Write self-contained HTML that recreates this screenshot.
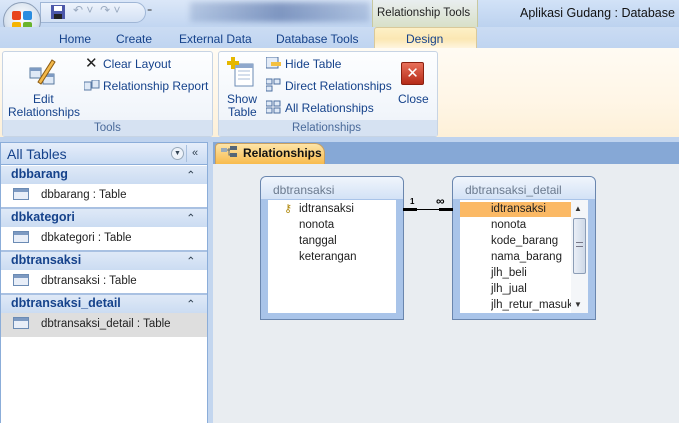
<!DOCTYPE html>
<html><head><meta charset="utf-8"><style>
*{margin:0;padding:0;box-sizing:border-box}
body{width:679px;height:423px;overflow:hidden;position:relative;font-family:"Liberation Sans","DejaVu Sans",sans-serif;font-size:11.5px;color:#15428b;background:#e9edf1}
.a{position:absolute}
.t{color:#222;font-size:11.5px;white-space:nowrap}
</style></head><body>
<div class="a" style="left:0;top:0;width:679px;height:27px;background:linear-gradient(#dbe7f8,#c2d6f1)"></div>
<div class="a" style="left:190px;top:2px;width:180px;height:20px;background:linear-gradient(90deg,rgba(90,120,170,.25),rgba(60,90,150,.55),rgba(100,130,180,.3));filter:blur(3px)"></div>
<div class="a" style="left:478px;top:0;width:201px;height:27px;background:linear-gradient(#d2e2f7,#bcd2ef)"></div>
<div class="a" style="left:40px;top:2px;width:106px;height:21px;border:1px solid #9fb6d6;border-radius:0 12px 12px 0;background:linear-gradient(#eef4fc,#d3e1f4)"></div>
<div class="a" style="left:3px;top:2px;width:38px;height:38px;border-radius:50%;background:radial-gradient(circle at 50% 40%,#fff,#d8e2ee 60%,#9fb0c6);border:1px solid #8d9fb8"></div>
<svg class="a" style="left:10px;top:9px" width="24" height="24" viewBox="0 0 24 24"><rect x="2" y="2" width="9" height="9" rx="2" fill="#e8441b"/><rect x="13" y="2" width="9" height="9" rx="2" fill="#2b8de0"/><rect x="2" y="13" width="9" height="9" rx="2" fill="#f5b400"/><rect x="13" y="13" width="9" height="9" rx="2" fill="#6ab42c"/></svg>
<svg class="a" style="left:51px;top:5px" width="14" height="14"><rect x="0" y="0" width="14" height="14" fill="#4b57a9"/><rect x="3" y="1" width="8" height="5" fill="#fff"/><rect x="3" y="9" width="8" height="5" fill="#222"/></svg>
<div class="a" style="left:73px;top:3px;color:#9aaac0;font-size:12px">↶ ˅ &nbsp;↷ ˅</div>
<div class="a" style="left:147px;top:4px;color:#333;font-size:10px">₌</div>
<div class="a" style="left:372px;top:0;width:106px;height:27px;background:linear-gradient(#e9eef0,#d8e0c8);border-left:1px solid #c8c8a0;border-right:1px solid #c8c8a0"></div>
<div class="a t" style="left:377px;top:7px">Relationship Tools</div>
<div class="a t" style="left:520px;top:6px;font-size:12.5px;color:#111">Aplikasi Gudang : Database (A</div>
<div class="a" style="left:0;top:27px;width:679px;height:22px;background:linear-gradient(#cbdcf3,#bfd4f0)"></div>
<div class="a" style="left:59px;top:32px;font-size:12px">Home</div>
<div class="a" style="left:116px;top:32px;font-size:12px">Create</div>
<div class="a" style="left:179px;top:32px;font-size:12px">External Data</div>
<div class="a" style="left:276px;top:32px;font-size:12px">Database Tools</div>
<div class="a" style="left:374px;top:27px;width:103px;height:23px;border:1px solid #d9c99a;border-bottom:none;border-radius:3px 3px 0 0;background:linear-gradient(#fdf0c7,#fbe7b3 50%,#fff8e8)"></div>
<div class="a" style="left:406px;top:32px;font-size:12px">Design</div>
<div class="a" style="left:0;top:48px;width:679px;height:92px;background:linear-gradient(#fffbf3,#fff6e6 60%,#fdf0d8);border-bottom:3px solid #c2d6ef"></div>
<div class="a" style="left:0;top:137px;width:679px;height:5px;background:#bfd3ee"></div>
<div class="a" style="left:2px;top:51px;width:211px;height:86px;border:1px solid #c7d4e4;border-radius:3px;background:linear-gradient(#fdfeff,#edf2f9)"></div>
<div class="a" style="left:3px;top:120px;width:209px;height:16px;background:#d6e2f2"></div>
<div class="a" style="left:94px;top:122px;color:#4a6a9a">Tools</div>
<div class="a" style="left:218px;top:51px;width:220px;height:86px;border:1px solid #c7d4e4;border-radius:3px;background:linear-gradient(#fdfeff,#edf2f9)"></div>
<div class="a" style="left:219px;top:120px;width:218px;height:16px;background:#d6e2f2"></div>
<div class="a" style="left:292px;top:122px;color:#4a6a9a">Relationships</div>
<svg class="a" style="left:28px;top:56px" width="30" height="32"><rect x="2" y="12" width="11" height="10" fill="#dfe9f6" stroke="#58799f"/><rect x="2" y="12" width="11" height="3" fill="#7d9ac2"/><rect x="15" y="18" width="11" height="10" fill="#dfe9f6" stroke="#58799f"/><rect x="15" y="18" width="11" height="3" fill="#7d9ac2"/><path d="M10 26 L24 4 L27 6 L13 28 Z" fill="#f2b84a" stroke="#8b5a10"/></svg>
<div class="a t" style="left:33px;top:92px;color:#15428b;font-size:12px">Edit</div>
<div class="a t" style="left:8px;top:105px;color:#15428b;font-size:12px">Relationships</div>
<div class="a" style="left:85px;top:54px;font-size:15px;color:#222">✕</div>
<div class="a t" style="left:103px;top:57px;color:#15428b;font-size:12px">Clear Layout</div>
<svg class="a" style="left:84px;top:80px" width="16" height="12"><rect x="0" y="2" width="7" height="8" fill="#dfe9f6" stroke="#5a7aa5"/><rect x="8" y="0" width="7" height="8" fill="#dfe9f6" stroke="#5a7aa5"/></svg>
<div class="a t" style="left:103px;top:79px;color:#15428b;font-size:12px">Relationship Report</div>
<svg class="a" style="left:227px;top:56px" width="30" height="32"><rect x="8" y="8" width="18" height="22" fill="#fff" stroke="#6b8bb4"/><rect x="8" y="8" width="18" height="4" fill="#8fa8cc"/><path d="M11 15h12M11 19h12M11 23h12" stroke="#a8bcd8"/><path d="M6 1v12M0 7h12" stroke="#e6b800" stroke-width="4"/></svg>
<div class="a t" style="left:227px;top:92px;color:#15428b;font-size:12px">Show</div>
<div class="a t" style="left:228px;top:105px;color:#15428b;font-size:12px">Table</div>
<svg class="a" style="left:266px;top:57px" width="16" height="60"><rect x="0" y="0" width="12" height="11" fill="#e4ecf7" stroke="#4d6fa0"/><rect x="5" y="5" width="10" height="4" fill="#f4c040"/><rect x="0" y="22" width="6" height="5" fill="#dfe9f6" stroke="#4d6fa0"/><rect x="8" y="22" width="6" height="5" fill="#dfe9f6" stroke="#4d6fa0"/><rect x="0" y="29" width="6" height="5" fill="#dfe9f6" stroke="#4d6fa0"/><rect x="0" y="44" width="6" height="5" fill="#dfe9f6" stroke="#4d6fa0"/><rect x="8" y="44" width="6" height="5" fill="#dfe9f6" stroke="#4d6fa0"/><rect x="0" y="51" width="6" height="5" fill="#dfe9f6" stroke="#4d6fa0"/><rect x="8" y="51" width="6" height="5" fill="#dfe9f6" stroke="#4d6fa0"/></svg>
<div class="a t" style="left:285px;top:57px;color:#15428b;font-size:12px">Hide Table</div>
<div class="a t" style="left:285px;top:79px;color:#15428b;font-size:12px">Direct Relationships</div>
<div class="a t" style="left:285px;top:101px;color:#15428b;font-size:12px">All Relationships</div>
<div class="a" style="left:401px;top:62px;width:23px;height:23px;border-radius:2px;background:linear-gradient(#e8705a,#b52b18);border:1px solid #8a2010;color:#fff;font-size:15px;font-weight:bold;text-align:center;line-height:21px">✕</div>
<div class="a t" style="left:398px;top:92px;color:#15428b;font-size:12px">Close</div>
<div class="a" style="left:0;top:142px;width:208px;height:281px;background:#fff;border-left:1px solid #8badd9;border-right:1px solid #8badd9"></div>
<div class="a" style="left:208px;top:142px;width:5px;height:281px;background:#c3d6ef"></div>
<div class="a" style="left:0;top:142px;width:208px;height:23px;background:linear-gradient(#e6eefa,#c9dbf3);border:1px solid #8badd9"></div>
<div class="a" style="left:7px;top:146px;font-size:14px;color:#15428b">All Tables</div>
<div class="a" style="left:171px;top:147px;width:13px;height:13px;border-radius:50%;border:1px solid #9ab;background:#eef3fa;font-size:7px;text-align:center;line-height:12px;color:#345">▼</div>
<div class="a" style="left:186px;top:145px;width:1px;height:17px;background:#a9c0de"></div>
<div class="a" style="left:192px;top:147px;font-size:11px;color:#345">«</div>
<div class="a" style="left:1px;top:166px;width:206px;height:18px;background:linear-gradient(#dfe9f7,#cbdcf2)"></div>
<div class="a" style="left:11px;top:167px;font-weight:bold;font-size:12.5px">dbbarang</div>
<div class="a" style="left:186px;top:168px;color:#345">⌃</div>
<div class="a t" style="left:41px;top:189px">dbbarang : Table</div>
<div class="a" style="left:1px;top:207px;width:206px;height:2px;background:#a9c1e2"></div>
<div class="a" style="left:1px;top:209px;width:206px;height:18px;background:linear-gradient(#dfe9f7,#cbdcf2)"></div>
<div class="a" style="left:11px;top:210px;font-weight:bold;font-size:12.5px">dbkategori</div>
<div class="a" style="left:186px;top:211px;color:#345">⌃</div>
<div class="a t" style="left:41px;top:232px">dbkategori : Table</div>
<div class="a" style="left:1px;top:250px;width:206px;height:2px;background:#a9c1e2"></div>
<div class="a" style="left:1px;top:252px;width:206px;height:18px;background:linear-gradient(#dfe9f7,#cbdcf2)"></div>
<div class="a" style="left:11px;top:253px;font-weight:bold;font-size:12.5px">dbtransaksi</div>
<div class="a" style="left:186px;top:254px;color:#345">⌃</div>
<div class="a t" style="left:41px;top:275px">dbtransaksi : Table</div>
<div class="a" style="left:1px;top:293px;width:206px;height:2px;background:#a9c1e2"></div>
<div class="a" style="left:1px;top:295px;width:206px;height:18px;background:linear-gradient(#dfe9f7,#cbdcf2)"></div>
<div class="a" style="left:11px;top:296px;font-weight:bold;font-size:12.5px">dbtransaksi_detail</div>
<div class="a" style="left:186px;top:297px;color:#345">⌃</div>
<div class="a" style="left:1px;top:313px;width:206px;height:24px;background:#dedede"></div>
<div class="a t" style="left:41px;top:318px">dbtransaksi_detail : Table</div>
<svg class="a" style="left:13px;top:188px" width="16" height="150"><g fill="#e8eef8" stroke="#6b8bb4"><rect x=".5" y=".5" width="15" height="11"/><rect x=".5" y="43.5" width="15" height="11"/><rect x=".5" y="86.5" width="15" height="11"/><rect x=".5" y="129.5" width="15" height="11"/></g><g fill="#7d9ac2"><rect x="1" y="1" width="14" height="3"/><rect x="1" y="44" width="14" height="3"/><rect x="1" y="87" width="14" height="3"/><rect x="1" y="130" width="14" height="3"/></g></svg>
<div class="a" style="left:213px;top:142px;width:466px;height:22px;background:#86a8d6"></div>
<div class="a" style="left:215px;top:143px;width:110px;height:21px;border-radius:4px 10px 0 0;background:linear-gradient(#fde4a8,#f8bb4d);border:1px solid #c9a060;border-bottom:none"></div>
<svg class="a" style="left:221px;top:146px" width="16" height="12"><rect x="0" y="2" width="6" height="4" fill="#9ab"/><rect x="9" y="0" width="7" height="4" fill="#567"/><rect x="9" y="7" width="7" height="4" fill="#567"/><path d="M6 4h3M8 2v7h1" stroke="#567" fill="none"/></svg>
<div class="a" style="left:243px;top:146px;font-weight:bold;color:#111;font-size:12px">Relationships</div>
<div class="a" style="left:260px;top:176px;width:144px;height:144px;border:1px solid #6a86ae;border-radius:6px 6px 0 0;background:#a9c4e9"></div>
<div class="a" style="left:261px;top:177px;width:142px;height:22px;border-radius:5px 5px 0 0;background:linear-gradient(#f0f5fc,#d3e2f6)"></div>
<div class="a" style="left:273px;top:183px;color:#6b7a8e;font-size:12px">dbtransaksi</div>
<div class="a" style="left:268px;top:200px;width:128px;height:113px;background:#fff"></div>
<div class="a" style="left:284px;top:202px;color:#b08a10;font-size:11px">⚷</div>
<div class="a t" style="left:299px;top:203px">idtransaksi</div>
<div class="a t" style="left:299px;top:219px">nonota</div>
<div class="a t" style="left:299px;top:235px">tanggal</div>
<div class="a t" style="left:299px;top:251px">keterangan</div>
<div class="a" style="left:452px;top:176px;width:144px;height:144px;border:1px solid #6a86ae;border-radius:6px 6px 0 0;background:#a9c4e9"></div>
<div class="a" style="left:453px;top:177px;width:142px;height:22px;border-radius:5px 5px 0 0;background:linear-gradient(#f0f5fc,#d3e2f6)"></div>
<div class="a" style="left:465px;top:183px;color:#6b7a8e;font-size:12px">dbtransaksi_detail</div>
<div class="a" style="left:460px;top:200px;width:128px;height:113px;background:#fff;overflow:hidden"></div>
<div class="a" style="left:460px;top:202px;width:111px;height:15px;background:#fbb965"></div>
<div class="a t" style="left:491px;top:203px">idtransaksi</div>
<div class="a t" style="left:491px;top:219px">nonota</div>
<div class="a t" style="left:491px;top:235px">kode_barang</div>
<div class="a t" style="left:491px;top:251px">nama_barang</div>
<div class="a t" style="left:491px;top:267px">jlh_beli</div>
<div class="a t" style="left:491px;top:283px">jlh_jual</div>
<div class="a t" style="left:491px;top:299px;width:80px;overflow:hidden">jlh_retur_masuk</div>
<div class="a" style="left:571px;top:200px;width:17px;height:113px;background:#f4f6f9"></div>
<div class="a" style="left:574px;top:204px;font-size:8px;color:#333">▲</div>
<div class="a" style="left:574px;top:300px;font-size:8px;color:#333">▼</div>
<div class="a" style="left:573px;top:218px;width:13px;height:56px;border:1px solid #8c9db6;border-radius:2px;background:linear-gradient(90deg,#e9eef6,#cfd9e8)"></div>
<div class="a" style="left:576px;top:242px;width:7px;height:5px;border-top:1px solid #778;border-bottom:1px solid #778"></div>
<svg class="a" style="left:403px;top:200px" width="50" height="16"><path d="M0 9.5h50" stroke="#000" stroke-width="1"/><rect x="0" y="8" width="14" height="3" fill="#000"/><rect x="36" y="8" width="14" height="3" fill="#000"/></svg>
<div class="a" style="left:410px;top:197px;font-size:8px;font-weight:bold;color:#000">1</div>
<div class="a" style="left:436px;top:194px;font-size:12px;font-weight:bold;color:#000">∞</div>
</body></html>
